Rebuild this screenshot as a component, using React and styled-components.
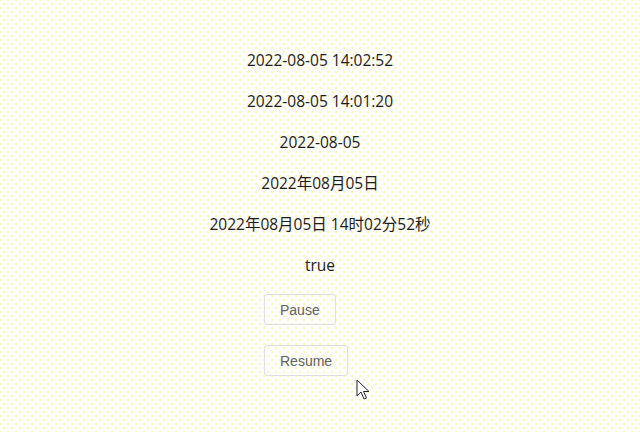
import styled, { createGlobalStyle } from 'styled-components';

const GlobalStyle = createGlobalStyle`
  html, body {
    margin: 0;
    padding: 0;
  }
  body {
    width: 640px;
    height: 432px;
    overflow: hidden;
    background-color: #fdfdfb;
    background-image:
      radial-gradient(circle, #fbf38a 0.6px, transparent 0.9px),
      radial-gradient(circle, #fbf38a 0.6px, transparent 0.9px);
    background-size: 8px 8px;
    background-position: 0 0, 4px 4px;
    font-family: "Open Sans", "Noto Sans CJK SC", sans-serif;
  }
`

const Page = styled.div`
  position: relative;
  width: 640px;
  height: 432px;
  display: flex;
  flex-direction: column;
  align-items: center;
  padding-top: 49px;
  box-sizing: border-box;
`

const Lines = styled.div`
  display: flex;
  flex-direction: column;
  align-items: center;
  gap: 19px;
`

const Line = styled.div`
  font-size: 15.5px;
  line-height: 22px;
  color: #1c1c1c;
  white-space: nowrap;
`

const ButtonGroup = styled.div`
  width: 112px;
  margin-top: 18px;
  display: flex;
  flex-direction: column;
  align-items: flex-start;
  gap: 20px;
`

const Button = styled.button`
  height: 31px;
  padding: 0 15px;
  border: 1px solid #dedede;
  border-radius: 3px;
  background: transparent;
  font-family: "Liberation Sans", Arial, sans-serif;
  font-size: 14px;
  color: #606266;
  cursor: pointer;
`

const Cursor = styled.svg`
  position: absolute;
  left: 356px;
  top: 379px;
`

const lines = [
  '2022-08-05 14:02:52',
  '2022-08-05 14:01:20',
  '2022-08-05',
  '2022年08月05日',
  '2022年08月05日 14时02分52秒',
  'true',
]

const App = () => {
  return (
    <>
      <GlobalStyle />
      <Page>
        <Lines>
          {lines.map((t) => (
            <Line key={t}>{t}</Line>
          ))}
        </Lines>
        <ButtonGroup>
          <Button>Pause</Button>
          <Button>Resume</Button>
        </ButtonGroup>
        <Cursor width="14" height="22" viewBox="0 0 14 22">
          <path
            d="M1 1 L1 17 L5 13 L8 20 L10.5 19 L7.5 12.5 L13 12.5 Z"
            fill="#fff"
            stroke="#222"
            strokeWidth="1"
            strokeLinejoin="miter"
          />
        </Cursor>
      </Page>
    </>
  )
}

export default App
